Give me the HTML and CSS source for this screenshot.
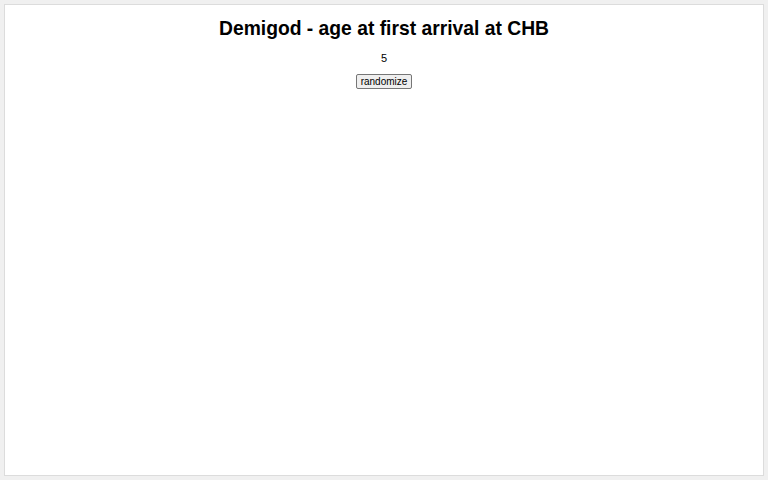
FILE: index.html
```html
<!DOCTYPE html>
<html>
<head>
<meta charset="utf-8">
<link rel="stylesheet" href="styles.css">
</head>
<body>
<main class="card">
  <h1 class="title">Demigod - age at first arrival at CHB</h1>
  <p class="value">5</p>
  <button class="randomize" type="button">randomize</button>
</main>
</body>
</html>
```
FILE: styles.css
```css
html, body {
  margin: 0;
  height: 100%;
}
body {
  background: #f0f0f0;
  padding: 4px;
  box-sizing: border-box;
  font-family: "Liberation Sans", Arial, sans-serif;
}
.card {
  box-sizing: border-box;
  height: 472px;
  background: #fff;
  border: 1px solid #dcdcdc;
  display: flex;
  flex-direction: column;
  align-items: center;
}
.title {
  margin: 12px 0 0;
  font-size: 19.3px;
  font-weight: bold;
  color: #000;
  line-height: 24px;
}
.value {
  margin: 11px 0 0;
  font-size: 11px;
  line-height: 13px;
  color: #000;
}
.randomize {
  margin-top: 9px;
  font-family: "Liberation Sans", Arial, sans-serif;
  font-size: 10px;
  line-height: 11px;
  padding: 1px 4px;
  background: #efefef;
  border: 1px solid #767676;
  border-radius: 2px;
  color: #000;
}
```
